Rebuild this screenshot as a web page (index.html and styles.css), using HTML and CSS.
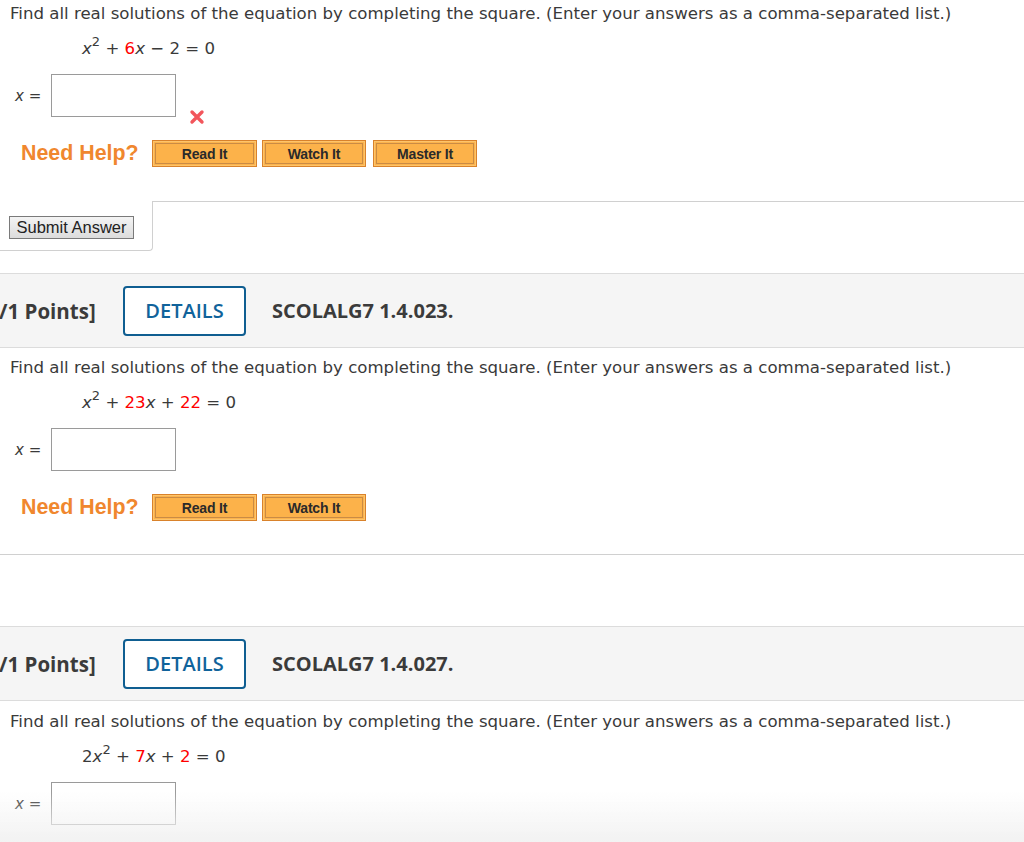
FILE: index.html
```html
<!DOCTYPE html>
<html>
<head>
<meta charset="utf-8">
<link rel="stylesheet" href="styles.css">
</head>
<body>
<div class="question q-first">
  <div class="prompt">Find all real solutions of the equation by completing the square. (Enter your answers as a comma-separated list.)</div>
  <div class="eq"><i>x</i><sup>2</sup> + <span class="red">6</span><i>x</i> &minus; 2 = 0</div>
  <div class="answer">
    <span class="var"><i>x</i> =</span>
    <span class="box"></span>
    <svg class="wrong" width="16" height="16" viewBox="0 0 16 16"><path d="M3 3 L13 13 M13 3 L3 13" stroke="#f2565c" stroke-width="3.4" stroke-linecap="round"/></svg>
  </div>
  <div class="help">
    <span class="need">Need Help?</span>
    <span class="obtn w105">Read It</span>
    <span class="obtn w104 g5">Watch It</span>
    <span class="obtn w104 g7">Master It</span>
  </div>
</div>
<div class="submit-row">
  <div class="submit-cell"><span class="submit">Submit Answer</span></div>
  <div class="submit-rest"></div>
</div>

<div class="header">
  <span class="points">/1 Points]</span>
  <span class="details">DETAILS</span>
  <span class="code">SCOLALG7 1.4.023.</span>
</div>
<div class="question q-mid">
  <div class="prompt">Find all real solutions of the equation by completing the square. (Enter your answers as a comma-separated list.)</div>
  <div class="eq"><i>x</i><sup>2</sup> + <span class="red">23</span><i>x</i> + <span class="red">22</span> = 0</div>
  <div class="answer">
    <span class="var"><i>x</i> =</span>
    <span class="box"></span>
  </div>
  <div class="help">
    <span class="need">Need Help?</span>
    <span class="obtn w105">Read It</span>
    <span class="obtn w104 g5">Watch It</span>
  </div>
</div>
<div class="divider"></div>

<div class="header">
  <span class="points">/1 Points]</span>
  <span class="details">DETAILS</span>
  <span class="code">SCOLALG7 1.4.027.</span>
</div>
<div class="question q-mid q-last">
  <div class="prompt">Find all real solutions of the equation by completing the square. (Enter your answers as a comma-separated list.)</div>
  <div class="eq">2<i>x</i><sup>2</sup> + <span class="red">7</span><i>x</i> + <span class="red">2</span> = 0</div>
  <div class="answer">
    <span class="var"><i>x</i> =</span>
    <span class="box"></span>
  </div>
</div>
<div class="fade"></div>
</body>
</html>
```
FILE: styles.css
```css
html, body {
  margin: 0;
  padding: 0;
  background: #fff;
  overflow: hidden;
}
body {
  font-family: "DejaVu Sans", Verdana, sans-serif;
  color: #3a3a3a;
  width: 1024px;
  height: 842px;
}
.question {
  padding-left: 10px;
}
.q-first { padding-top: 4px; }
.q-mid { padding-top: 10px; }
.q-last { padding-top: 11px; }
.prompt {
  font-size: 16.6px;
  line-height: 20px;
  white-space: nowrap;
}
.eq {
  font-size: 16.6px;
  line-height: 20px;
  margin-top: 15px;
  margin-left: 72px;
  white-space: nowrap;
}
.eq i, .var i { font-style: italic; }
.eq sup {
  font-size: 13px;
  line-height: 0;
  vertical-align: 8px;
}
.red { color: #f00; }
.answer {
  display: flex;
  align-items: center;
  margin-top: 15px;
  height: 43px;
}
.var {
  font-size: 15px;
  width: 41px;
  padding-left: 5px;
  box-sizing: border-box;
}
.box {
  width: 125px;
  height: 43px;
  box-sizing: border-box;
  border: 1px solid #9a9a9a;
  background: #fff;
}
.wrong {
  align-self: flex-end;
  margin-left: 13px;
  margin-bottom: -8px;
}
.help {
  display: flex;
  align-items: center;
  margin-top: 23px;
  height: 27px;
}
.need {
  font-family: "Liberation Sans", Arial, sans-serif;
  font-weight: bold;
  font-size: 21.4px;
  color: #f0872e;
  margin-left: 11px;
  width: 131px;
  white-space: nowrap;
}
.obtn {
  display: flex;
  align-items: center;
  justify-content: center;
  height: 27px;
  box-sizing: border-box;
  border: 1px solid #d9822b;
  background: #fcb24a;
  box-shadow: inset 0 0 0 1px #fdc46a, inset 0 0 0 2px #fbb24c, inset 0 0 0 3px #c98b45;
  font-family: "Liberation Sans", Arial, sans-serif;
  font-weight: bold;
  font-size: 14px;
  color: #2a2a2a;
  letter-spacing: -0.2px;
}
.w105 { width: 105px; }
.w104 { width: 104px; }
.g5 { margin-left: 5px; }
.g7 { margin-left: 7px; }
.submit-row {
  display: flex;
  margin-top: 34px;
  height: 50px;
}
.submit-cell {
  width: 153px;
  box-sizing: border-box;
  border-right: 1px solid #d0d0d0;
  border-bottom: 1px solid #d0d0d0;
  border-bottom-right-radius: 4px;
  padding-left: 9px;
  padding-top: 15px;
}
.submit {
  display: inline-flex;
  align-items: center;
  justify-content: center;
  width: 125px;
  height: 23px;
  box-sizing: border-box;
  border: 1px solid #7a7a7a;
  background: linear-gradient(#f4f4f4, #dcdcdc);
  font-family: "Liberation Sans", Arial, sans-serif;
  font-size: 16.5px;
  color: #222;
  white-space: nowrap;
}
.submit-rest {
  flex: 1;
  border-top: 1px solid #d0d0d0;
}
.header {
  display: flex;
  align-items: center;
  margin-top: 22px;
  height: 75px;
  box-sizing: border-box;
  background: #f5f5f5;
  border-top: 1px solid #dcdcdc;
  border-bottom: 1px solid #dcdcdc;
  font-family: "Open Sans", sans-serif;
  color: #3b3b3b;
}
.points {
  font-weight: bold;
  font-size: 20.5px;
  margin-left: -1px;
  width: 124px;
  white-space: nowrap;
}
.details {
  display: flex;
  align-items: center;
  justify-content: center;
  width: 123px;
  height: 50px;
  box-sizing: border-box;
  border: 2px solid #0f5e91;
  border-radius: 4px;
  background: #fff;
  color: #10639b;
  font-weight: 600;
  font-size: 20px;
}
.code {
  margin-left: 26px;
  font-weight: bold;
  font-size: 20px;
  white-space: nowrap;
}
.divider {
  margin-top: 33px;
  height: 0;
  border-top: 1px solid #d0d0d0;
}
.divider + .header { margin-top: 71px; }
.fade {
  position: fixed;
  left: 0;
  right: 0;
  bottom: 0;
  height: 50px;
  background: linear-gradient(rgba(240,240,240,0), #f2f2f2);
  pointer-events: none;
}
```
